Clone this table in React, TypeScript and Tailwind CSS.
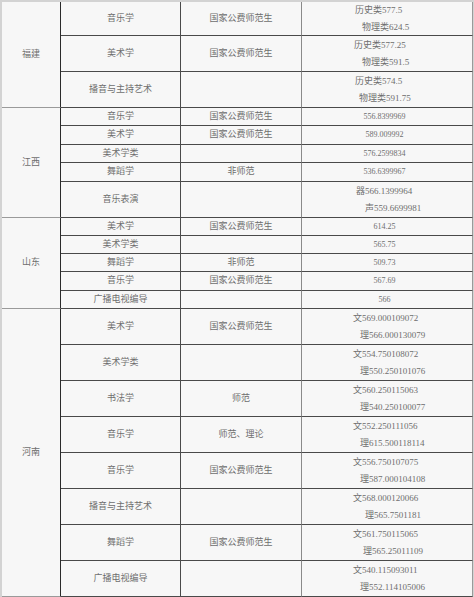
import { Fragment } from "react";

type Row = {
  major: string;
  kind: string;
  score: string[];
  // left offset of each score line inside the last column
  pads?: string[];
};

type Province = {
  name: string;
  span: string;
  rows: Row[];
};

const W = "pl-[51px]";
const L = "pl-[58px]";

const data: Province[] = [
  {
    name: "福建",
    span: "row-span-3",
    rows: [
      { major: "音乐学", kind: "国家公费师范生", score: ["历史类577.5", "物理类624.5"], pads: ["pl-[53px]", "pl-[60px]"] },
      { major: "美术学", kind: "国家公费师范生", score: ["历史类577.25", "物理类591.5"], pads: ["pl-[52px]", "pl-[60px]"] },
      { major: "播音与主持艺术", kind: "", score: ["历史类574.5", "物理类591.75"], pads: ["pl-[53px]", "pl-[57px]"] },
    ],
  },
  {
    name: "江西",
    span: "row-span-5",
    rows: [
      { major: "音乐学", kind: "国家公费师范生", score: ["556.8399969"] },
      { major: "美术学", kind: "国家公费师范生", score: ["589.009992"] },
      { major: "美术学类", kind: "", score: ["576.2599834"] },
      { major: "舞蹈学", kind: "非师范", score: ["536.6399967"] },
      { major: "音乐表演", kind: "", score: ["器566.1399964", "声559.6699981"], pads: ["pl-[54px]", "pl-[63px]"] },
    ],
  },
  {
    name: "山东",
    span: "row-span-5",
    rows: [
      { major: "美术学", kind: "国家公费师范生", score: ["614.25"] },
      { major: "美术学类", kind: "", score: ["565.75"] },
      { major: "舞蹈学", kind: "非师范", score: ["509.73"] },
      { major: "音乐学", kind: "国家公费师范生", score: ["567.69"] },
      { major: "广播电视编导", kind: "", score: ["566"] },
    ],
  },
  {
    name: "河南",
    span: "row-span-8",
    rows: [
      { major: "美术学", kind: "国家公费师范生", score: ["文569.000109072", "理566.000130079"], pads: [W, L] },
      { major: "美术学类", kind: "", score: ["文554.750108072", "理550.250101076"], pads: [W, L] },
      { major: "书法学", kind: "师范", score: ["文560.250115063", "理540.250100077"], pads: [W, L] },
      { major: "音乐学", kind: "师范、理论", score: ["文552.250111056", "理615.500118114"], pads: [W, L] },
      { major: "音乐学", kind: "国家公费师范生", score: ["文556.750107075", "理587.000104108"], pads: [W, L] },
      { major: "播音与主持艺术", kind: "", score: ["文568.000120066", "理565.7501181"], pads: [W, "pl-[63px]"] },
      { major: "舞蹈学", kind: "国家公费师范生", score: ["文561.750115065", "理565.25011109"], pads: [W, "pl-[61px]"] },
      { major: "广播电视编导", kind: "", score: ["文540.115093011", "理552.114105006"], pads: [W, L] },
    ],
  },
];

const cell = "flex items-center justify-center border-b border-r border-[#4a4a4a]";

export default function App() {
  return (
    <div className="h-[597px] w-[474px] overflow-hidden bg-[#d3d3d3] pt-[2px] pl-[2px] font-['Liberation_Serif','Noto_Sans_CJK_SC',serif] text-[9px] text-[#6e6e6e]">
      <div className="grid w-[471px] grid-cols-[59px_120px_121px_171px] grid-rows-[34px_36px_36px_18px_19px_18px_19px_36px_18px_18px_18px_19px_18px_36px_36px_36px_36px_36px_36px_36px_36px] bg-[#f7f7f7]">
        {data.map((p) => (
          <Fragment key={p.name}>
            <div className={`${p.span} col-start-1 flex items-center justify-center border-b border-r border-b-[#9a9a9a] border-r-[#2a2a2a]`}>
              {p.name}
            </div>
            {p.rows.map((r, i) => (
              <Fragment key={i}>
                <div className={cell}>{r.major}</div>
                <div className={`${cell} border-r-[#8a8a8a]`}>{r.kind}</div>
                {r.score.length === 1 ? (
                  <div className={`${cell} border-r-[#9a9a9a] pr-[5px] text-[8px]`}>{r.score[0]}</div>
                ) : (
                  <div className="flex flex-col justify-center border-b border-r border-[#4a4a4a] border-r-[#9a9a9a] leading-[17px]">
                    {r.score.map((s, j) => (
                      <div key={j} className={r.pads ? r.pads[j] : ""}>{s}</div>
                    ))}
                  </div>
                )}
              </Fragment>
            ))}
          </Fragment>
        ))}
      </div>
    </div>
  );
}
